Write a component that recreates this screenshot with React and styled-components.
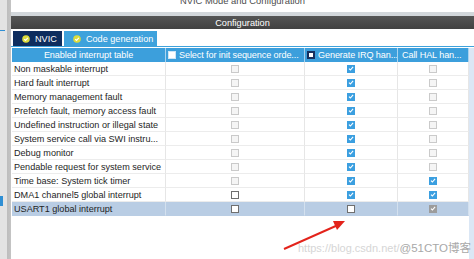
import React from "react";
import styled, { createGlobalStyle } from "styled-components";

const GlobalStyle = createGlobalStyle`
  html, body {
    margin: 0;
    padding: 0;
    background: #ffffff;
    overflow: hidden;
  }
  body {
    font-family: "Liberation Sans", Arial, sans-serif;
  }
`;

const Page = styled.div`
  position: relative;
  display: flex;
  width: 474px;
  height: 259px;
  overflow: hidden;
`;

const Rail = styled.div`
  display: flex;
  flex-direction: column;
  width: 11px;
  flex-shrink: 0;
  background: linear-gradient(to right, #e3e3e3 0, #e3e3e3 7px, #bdbdbd 7px, #c4c4c4 11px);
`;

const RailMark = styled.div`
  margin-top: ${(p) => p.top}px;
  width: ${(p) => p.w}px;
  height: ${(p) => p.h}px;
  background: #2f8fd4;
`;

const Main = styled.div`
  flex: 1;
  display: flex;
  flex-direction: column;
  min-width: 0;
`;

const TitleStrip = styled.div`
  height: 12px;
  display: flex;
  justify-content: center;
  overflow: hidden;
`;

const TitleText = styled.span`
  font-size: 9.4px;
  line-height: 9px;
  margin-top: -4px;
  color: #4d4d4d;
`;

const GreyBand = styled.div`
  height: 4px;
  background: #d2d7db;
`;

const ConfigBar = styled.div`
  height: 13px;
  display: flex;
  align-items: center;
  justify-content: center;
  background: linear-gradient(#555555, #424242);
  color: #ffffff;
  font-size: 9.2px;
`;

const TabRow = styled.div`
  display: flex;
  gap: 2px;
  margin-top: 2px;
  padding-left: 2px;
  height: 15px;
`;

const Tab = styled.div`
  display: flex;
  align-items: center;
  gap: 5px;
  width: ${(p) => p.w}px;
  padding-left: 9px;
  box-sizing: border-box;
  background: ${(p) => (p.active ? "#3ea2dc" : "#0e2d5e")};
  color: #ffffff;
  font-size: 9.1px;
  white-space: nowrap;
`;

const BlueRule = styled.div`
  height: 1px;
  background: #3ea2dc;
`;

const TableArea = styled.div`
  flex: 1;
  display: flex;
  margin-top: 1px;
  padding-left: 1px;
`;

const Table = styled.div`
  display: grid;
  grid-template-columns: 154px 139px 93px 71px;
  grid-auto-rows: 14px;
  align-content: start;
`;

const HeadCell = styled.div`
  display: flex;
  align-items: center;
  justify-content: ${(p) => (p.center ? "center" : "flex-start")};
  gap: 3px;
  padding-left: ${(p) => (p.center ? 0 : 2)}px;
  background: #3c9fdc;
  color: #ffffff;
  font-size: 9.1px;
  letter-spacing: -0.1px;
  white-space: nowrap;
  overflow: hidden;
  border-right: 1px solid #a9d3ef;
`;

const Cell = styled.div`
  display: flex;
  align-items: center;
  justify-content: ${(p) => (p.center ? "center" : "flex-start")};
  padding-left: ${(p) => (p.center ? 0 : 2)}px;
  background: ${(p) => (p.selected ? "#b9cde4" : "#ffffff")};
  color: #1e1e1e;
  font-size: 9.1px;
  white-space: nowrap;
  overflow: hidden;
  border-right: 1px solid ${(p) => (p.selected ? "#d3e0ee" : "#e6e6e6")};
  border-bottom: 1px solid ${(p) => (p.selected ? "#b9cde4" : "#ececec")};
  box-sizing: border-box;
`;

const ScrollStrip = styled.div`
  flex: 1;
  background: #dbe7f5;
`;

const boxStyles = {
  off: { bg: "#f5f5f5", border: "#cacaca" },
  on: { bg: "#3b9fe0", border: "#3b9fe0" },
  open: { bg: "#ffffff", border: "#6f6f6f" },
  locked: { bg: "#9c9c9c", border: "#9c9c9c" },
  head: { bg: "#ffffff", border: "#cfe6f6" },
  headDark: { bg: "#ffffff", border: "#16305e" },
};

const Box = styled.span`
  display: inline-flex;
  align-items: center;
  justify-content: center;
  width: 8px;
  height: 8px;
  flex-shrink: 0;
  box-sizing: border-box;
  background: ${(p) => boxStyles[p.kind].bg};
  border: ${(p) => (p.kind === "headDark" ? 2 : 1)}px solid ${(p) => boxStyles[p.kind].border};
`;

const Tick = () => (
  <svg width="7" height="7" viewBox="0 0 8 8">
    <path d="M1.3 4.2 L3.2 6 L6.8 1.8" fill="none" stroke="#ffffff" strokeWidth="1.5" />
  </svg>
);

const Check = ({ kind }) => (
  <Box kind={kind}>{(kind === "on" || kind === "locked") && <Tick />}</Box>
);

const TabIcon = () => (
  <svg width="8" height="8" viewBox="0 0 8 8">
    <circle cx="4" cy="4" r="3.8" fill="#dcdc3c" />
    <path d="M2.2 4.1 L3.5 5.3 L5.9 2.8" fill="none" stroke="#ffffff" strokeWidth="1.2" />
  </svg>
);

const Watermark = styled.div`
  position: absolute;
  left: 298px;
  top: 239px;
  font-size: 11px;
  color: #d6d6d6;
  white-space: nowrap;
  font-family: "Liberation Sans", "Noto Sans CJK SC", sans-serif;
`;

const WatermarkBrand = styled.span`
  color: #a8a8a8;
  font-size: 11.5px;
`;

const ArrowLayer = styled.svg`
  position: absolute;
  left: 0;
  top: 0;
  pointer-events: none;
`;

const rows = [
  ["Non maskable interrupt", "off", "on", "off"],
  ["Hard fault interrupt", "off", "on", "off"],
  ["Memory management fault", "off", "on", "off"],
  ["Prefetch fault, memory access fault", "off", "on", "off"],
  ["Undefined instruction or illegal state", "off", "on", "off"],
  ["System service call via SWI instru...", "off", "on", "off"],
  ["Debug monitor", "off", "on", "off"],
  ["Pendable request for system service", "off", "on", "off"],
  ["Time base: System tick timer", "off", "on", "on"],
  ["DMA1 channel5 global interrupt", "open", "on", "on"],
  ["USART1 global interrupt", "open", "open", "locked", true],
];

export default function App() {
  return (
    <Page>
      <GlobalStyle />
      <Rail>
        <RailMark top={30} w={5} h={1} />
        <RailMark top={165} w={3} h={10} />
      </Rail>
      <Main>
        <TitleStrip>
          <TitleText>NVIC Mode and Configuration</TitleText>
        </TitleStrip>
        <GreyBand />
        <ConfigBar>Configuration</ConfigBar>
        <TabRow>
          <Tab w={49}>
            <TabIcon />
            NVIC
          </Tab>
          <Tab w={93} active>
            <TabIcon />
            Code generation
          </Tab>
        </TabRow>
        <BlueRule />
        <TableArea>
          <Table>
            <HeadCell center>Enabled interrupt table</HeadCell>
            <HeadCell>
              <Check kind="head" />
              Select for init sequence orde...
            </HeadCell>
            <HeadCell>
              <Check kind="headDark" />
              Generate IRQ han...
            </HeadCell>
            <HeadCell>
              <span style={{ paddingLeft: 2 }}>Call HAL han...</span>
            </HeadCell>
            {rows.map(([name, a, b, c, selected]) => (
              <React.Fragment key={name}>
                <Cell selected={selected}>{name}</Cell>
                <Cell center selected={selected}>
                  <Check kind={a} />
                </Cell>
                <Cell center selected={selected}>
                  <Check kind={b} />
                </Cell>
                <Cell center selected={selected}>
                  <Check kind={c} />
                </Cell>
              </React.Fragment>
            ))}
          </Table>
          <ScrollStrip />
        </TableArea>
      </Main>
      <ArrowLayer width="474" height="259">
        <line x1="284" y1="249" x2="338" y2="225" stroke="#e3231b" strokeWidth="2" />
        <polygon points="345,221 333,221 337,230" fill="#e3231b" />
      </ArrowLayer>
      <Watermark>
        https://blog.csdn.net/<WatermarkBrand>@51CTO博客</WatermarkBrand>
      </Watermark>
    </Page>
  );
}
